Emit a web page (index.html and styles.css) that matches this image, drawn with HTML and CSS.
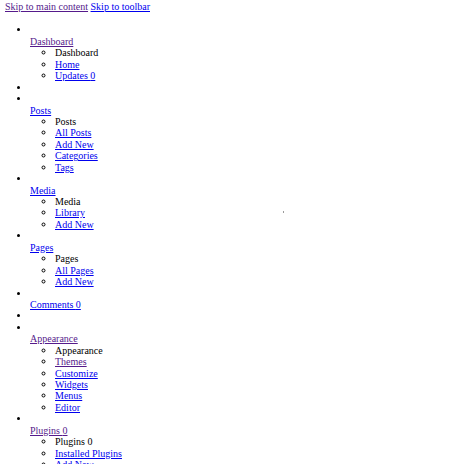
FILE: index.html
```html
<!DOCTYPE html>
<html lang="en">
<head>
<meta charset="utf-8">
<title>Dashboard</title>
<link rel="stylesheet" href="styles.css">
</head>
<body>
<div class="skip"><a class="seen" href="#main">Skip to main content</a> <a href="#toolbar">Skip to toolbar</a></div>
<ul class="menu">
  <li><div class="icon"><br></div><a class="seen" href="#">Dashboard</a>
    <ul class="sub">
      <li>Dashboard</li>
      <li><a href="#">Home</a></li>
      <li><a href="#">Updates <span>0</span></a></li>
    </ul>
  </li>
  <li><div class="sep"></div></li>
  <li><div class="icon"><br></div><a href="#">Posts</a>
    <ul class="sub">
      <li>Posts</li>
      <li><a href="#">All Posts</a></li>
      <li><a href="#">Add New</a></li>
      <li><a href="#">Categories</a></li>
      <li><a href="#">Tags</a></li>
    </ul>
  </li>
  <li><div class="icon"><br></div><a href="#">Media</a>
    <ul class="sub">
      <li>Media</li>
      <li><a href="#">Library</a></li>
      <li><a href="#">Add New</a></li>
    </ul>
  </li>
  <li><div class="icon"><br></div><a href="#">Pages</a>
    <ul class="sub">
      <li>Pages</li>
      <li><a href="#">All Pages</a></li>
      <li><a href="#">Add New</a></li>
    </ul>
  </li>
  <li><div class="icon"><br></div><a href="#">Comments <span>0</span></a></li>
  <li><div class="sep"></div></li>
  <li><div class="icon"><br></div><a class="seen" href="#">Appearance</a>
    <ul class="sub">
      <li>Appearance</li>
      <li><a class="seen" href="#">Themes</a></li>
      <li><a href="#">Customize</a></li>
      <li><a href="#">Widgets</a></li>
      <li><a href="#">Menus</a></li>
      <li><a href="#">Editor</a></li>
    </ul>
  </li>
  <li><div class="icon"><br></div><a class="seen" href="#">Plugins <span>0</span></a>
    <ul class="sub">
      <li>Plugins <span>0</span></li>
      <li><a href="#">Installed Plugins</a></li>
      <li><a href="#">Add New</a></li>
    </ul>
  </li>
</ul>
<span class="pixel"></span>
</body>
</html>
```
FILE: styles.css
```css
html {
  background: #ffffff;
}
body {
  margin: 1px 5px 5px 5px;
  font-family: "Liberation Serif", "Times New Roman", serif;
  font-size: 10px;
  line-height: 11.43px;
  color: #000000;
}
a {
  color: #0000ee;
  text-decoration: underline;
}
a.seen {
  color: #551a8b;
}
.menu {
  margin: 12px 0 0 0;
  padding-left: 25px;
  list-style: disc;
}
.menu > li > a {
  display: block;
}
.sub {
  margin: 0;
  padding-left: 25px;
  list-style: circle;
}
.sep {
  height: 0;
}
.pixel {
  position: absolute;
  left: 283px;
  top: 211px;
  width: 1px;
  height: 2px;
  background: #9a9a9a;
}
```
